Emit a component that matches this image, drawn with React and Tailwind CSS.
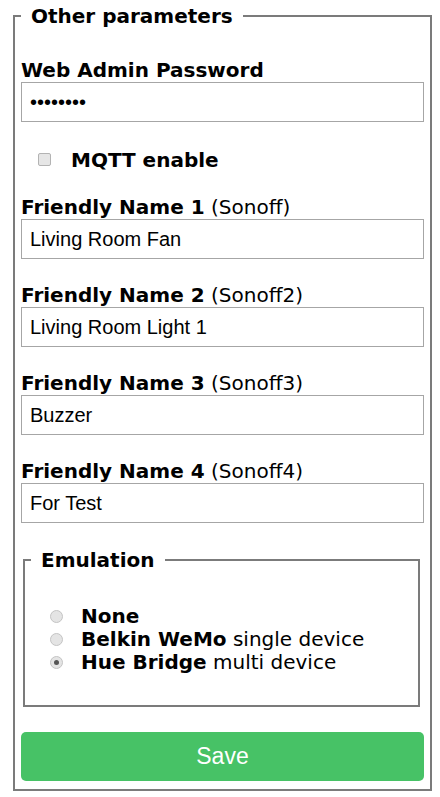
import { useState } from "react";

const verdana = "font-['DejaVu_Sans',Verdana,sans-serif]";
const arial = "font-['Liberation_Sans',Arial,sans-serif]";

const names = [
  { n: 1, dev: "Sonoff", value: "Living Room Fan" },
  { n: 2, dev: "Sonoff2", value: "Living Room Light 1" },
  { n: 3, dev: "Sonoff3", value: "Buzzer" },
  { n: 4, dev: "Sonoff4", value: "For Test" },
];

const emulations = [
  { id: "none", bold: "None", rest: "" },
  { id: "wemo", bold: "Belkin WeMo", rest: " single device" },
  { id: "hue", bold: "Hue Bridge", rest: " multi device" },
];

const Radio = ({ checked }) => (
  <span className="flex h-[13px] w-[13px] items-center justify-center rounded-full border border-[#c4c4c4] bg-[#e4e4e4]">
    {checked && <span className="h-[5px] w-[5px] rounded-full bg-[#555]" />}
  </span>
);

const App = () => {
  const [emu, setEmu] = useState("hue");
  const [mqtt, setMqtt] = useState(false);

  return (
    <div className={`min-h-[797px] bg-white text-black ${verdana}`}>
      <fieldset className="ml-[13px] mt-[4px] w-[419px] border-2 border-[#7b7b7b] px-[6px] pb-[8px] pt-[30px]">
        <legend className="px-[10px] text-[20px] font-bold leading-[24px]">
          Other parameters
        </legend>

        <label className="block text-[20px] font-bold leading-[24px]">
          Web Admin Password
        </label>
        <input
          type="password"
          defaultValue="12345678"
          className={`block h-[40px] w-full border border-[#a6a6a6] px-[8px] text-[20px] ${arial}`}
        />

        <div
          className="mt-[26px] flex h-[24px] cursor-pointer items-center"
          onClick={() => setMqtt(!mqtt)}
        >
          <span className="ml-[17px] mt-[-2px] flex h-[13px] w-[13px] items-center justify-center rounded-[2px] border border-[#b3b3b3] bg-[#e6e6e6] text-[10px] leading-none">
            {mqtt ? "✓" : ""}
          </span>
          <span className="ml-[20px] text-[20px] font-bold leading-[24px]">
            MQTT enable
          </span>
        </div>

        {names.map((f, i) => (
          <div key={f.n} className={i === 0 ? "mt-[23px]" : "mt-[24px]"}>
            <label className="block text-[20px] leading-[24px]">
              <b>Friendly Name {f.n}</b> ({f.dev})
            </label>
            <input
              type="text"
              defaultValue={f.value}
              className={`block h-[40px] w-full border border-[#a6a6a6] px-[8px] text-[20px] ${arial}`}
            />
          </div>
        ))}

        <fieldset className="ml-[2px] mr-[4px] mt-[25px] border-2 border-[#7b7b7b] px-[6px] pb-[31px] pt-[33px]">
          <legend className="px-[10px] text-[20px] font-bold leading-[24px]">
            Emulation
          </legend>
          {emulations.map((e) => (
            <div
              key={e.id}
              className="flex h-[23px] cursor-pointer items-center"
              onClick={() => setEmu(e.id)}
            >
              <span className="ml-[19px] mr-[18px]">
                <Radio checked={emu === e.id} />
              </span>
              <span className="text-[20px] leading-[23px]">
                <b>{e.bold}</b>
                {e.rest}
              </span>
            </div>
          ))}
        </fieldset>

        <button
          className={`mt-[25px] block h-[49px] w-full rounded-[5px] bg-[#47c266] text-[23px] text-white ${arial}`}
        >
          Save
        </button>
      </fieldset>
    </div>
  );
};

export default App;
